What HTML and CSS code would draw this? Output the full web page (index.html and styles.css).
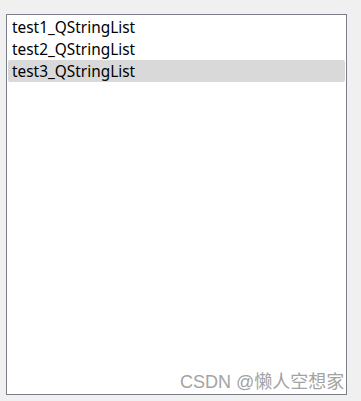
FILE: index.html
```html
<html>
  <head>
    <title>list widget</title>
    <meta name="viewport" content="width=device-width" />
    <link rel="stylesheet" href="styles.css">
  </head>
  <body>
    <main>
      <div class="list">
        <div class="item">test1_QStringList</div>
        <div class="item">test2_QStringList</div>
        <div class="item selected">test3_QStringList</div>
      </div>
      <div class="mark">CSDN @懒人空想家</div>
    </main>
  </body>
</html>
```

FILE: styles.css
```css
html,
body {
  width: 100%;
  height: 100%;
  margin: 0;
}

body {
  background: #f0f0f0;
  font: 15.4px "Noto Sans", "Noto Sans CJK SC", sans-serif;
  color: #000;
}

main {
  position: relative;
  padding: 14px 0 0 6px;
}

.list {
  box-sizing: border-box;
  width: 341px;
  height: 381px;
  border: 1px solid #7a7e88;
  background: #fff;
  padding: 1px;
}

.item {
  box-sizing: border-box;
  height: 22px;
  line-height: 22px;
  padding: 1px 0 0 4px;
  border-radius: 2px;
  white-space: nowrap;
  overflow: hidden;
}

.item.selected {
  background: #d9d9d9;
}

.mark {
  position: absolute;
  left: 180px;
  top: 371px;
  width: 165px;
  font: 18px/22px "Liberation Sans", "Noto Sans CJK SC", sans-serif;
  color: #a3a3a3;
  white-space: nowrap;
  overflow: hidden;
}
```
